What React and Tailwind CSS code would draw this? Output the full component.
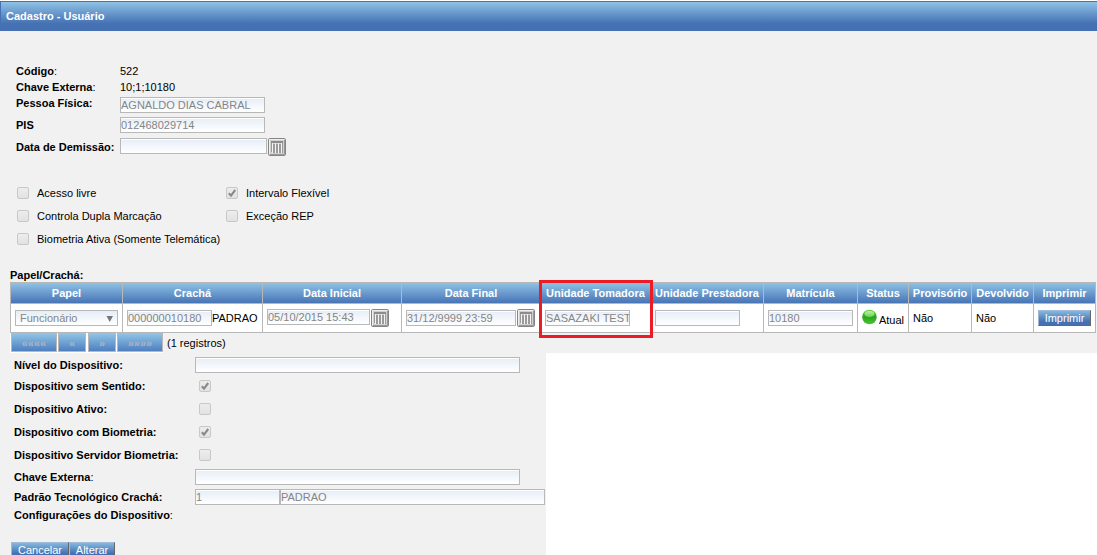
import { clsx } from 'clsx';

/**
 * Text box with the faint blue gradient used all over the form.
 */
function Field({ className = '', ...props }) {
  return (
    <input
      type="text"
      disabled
      className={clsx(
        'h-4 min-w-0 border border-[#b8b8b8] bg-linear-to-b from-[#e6edf7] to-white p-0 text-[#858585] shadow-[inset_0_1px_0_#fff]',
        className
      )}
      {...props}
    />
  );
}

function Check(props) {
  return (
    <span className="grid size-3 shrink-0">
      <input
        type="checkbox"
        disabled
        className="peer col-start-1 row-start-1 size-3 appearance-none rounded-xs border border-[#c8c8c8] bg-linear-to-b from-[#ededed] to-[#e2e2e2]"
        {...props}
      />
      <svg viewBox="0 0 12 12" className="invisible col-start-1 row-start-1 size-3 peer-checked:visible" fill="none" aria-hidden="true">
        <path d="M2.8 6.3 L5 8.6 L9.2 3" stroke="#8a8a8a" strokeWidth="2.1" />
      </svg>
    </span>
  );
}

function CalendarButton({ label }) {
  return (
    <button type="button" aria-label={label} className="size-[18px] shrink-0">
      <svg viewBox="0 0 18 18" className="size-full" aria-hidden="true">
        <rect x="0.5" y="0.5" width="17" height="17" rx="1.2" fill="#d0d0d0" stroke="#858585" />
        <path d="M1.5 16V1.5H16" fill="none" stroke="#f0f0f0" />
        <path d="M16.5 2V16.5H2" fill="none" stroke="#999" />
        <rect x="3" y="3" width="12" height="2" fill="#8c8c8c" />
        <path d="M4.5 5V15M7.5 5V15M10.5 5V15M13.5 5V15" stroke="#f4f4f4" />
        <path d="M3.5 5V14M5.5 6V15M6.5 6V15M8.5 6V15M9.5 6V15M11.5 6V15M12.5 6V15M14.5 5V15" stroke="#8c8c8c" strokeWidth="0.8" />
      </svg>
    </button>
  );
}

function ActionButton({ children, className = '' }) {
  return (
    <button
      type="button"
      className={clsx(
        'h-4 border border-t-[#9fb9d8] border-r-[#666] border-b-[#666] border-l-[#9fb9d8] bg-linear-to-b from-[#84b8df] to-[#4571b3] to-75% leading-[14px] text-white',
        className
      )}
    >
      {children}
    </button>
  );
}

function StatusDot() {
  return (
    <svg viewBox="0 0 16 16" className="size-4" aria-hidden="true">
      <defs>
        <linearGradient id="dot" x1="0" y1="0" x2="0" y2="1">
          <stop offset="0" stopColor="#5fd13c" />
          <stop offset="0.5" stopColor="#28a51c" />
          <stop offset="1" stopColor="#48c832" />
        </linearGradient>
        <linearGradient id="shine" x1="0" y1="0" x2="0" y2="1">
          <stop offset="0" stopColor="#d8f8c8" />
          <stop offset="1" stopColor="#7fdc60" />
        </linearGradient>
      </defs>
      <circle cx="8" cy="8" r="7.8" fill="url(#dot)" />
      <ellipse cx="8" cy="4.6" rx="5.4" ry="3.4" fill="url(#shine)" opacity="0.8" />
    </svg>
  );
}

const options = [
  { id: 'livre', label: 'Acesso livre' },
  { id: 'intervalo', label: 'Intervalo Flexível', checked: true },
  { id: 'dupla', label: 'Controla Dupla Marcação' },
  { id: 'rep', label: 'Exceção REP' },
  { id: 'biometria', label: 'Biometria Ativa (Somente Telemática)' },
];

const deviceFlags = [
  { id: 'sentido', label: 'Dispositivo sem Sentido:', checked: true },
  { id: 'ativo', label: 'Dispositivo Ativo:' },
  { id: 'comBiometria', label: 'Dispositivo com Biometria:', checked: true },
  { id: 'servidor', label: 'Dispositivo Servidor Biometria:' },
];

const columns = [
  { title: 'Papel', width: 'w-[112px]' },
  { title: 'Crachá', width: 'w-[140px]' },
  { title: 'Data Inicial', width: 'w-[139px]' },
  { title: 'Data Final', width: 'w-[139px]' },
  { title: 'Unidade Tomadora', width: 'w-[110px]', marked: true },
  { title: 'Unidade Prestadora', width: 'w-[113px]' },
  { title: 'Matrícula', width: 'w-[94px]' },
  { title: 'Status', width: 'w-[51px]' },
  { title: 'Provisório', width: 'w-[63px]' },
  { title: 'Devolvido', width: 'w-[62px]' },
  { title: 'Imprimir', width: 'w-[62px]' },
];

const pages = [
  { text: '««««', label: 'Primeira página', width: 'w-[46px]' },
  { text: '«', label: 'Página anterior', width: 'w-7' },
  { text: '»', label: 'Próxima página', width: 'ml-px w-7' },
  { text: '»»»»', label: 'Última página', width: 'w-[46px]' },
];

function UserForm() {
  return (
    <div className="grid grid-cols-[104px_1fr] items-center pl-4">
      <div className="h-4 leading-4"><b>Código</b>:</div>
      <div className="h-4 leading-4">522</div>
      <div className="h-4 leading-4"><b>Chave Externa</b>:</div>
      <div className="h-4 leading-4">10;1;10180</div>
      <label htmlFor="pessoa" className="self-start font-bold leading-4">Pessoa Física:</label>
      <div className="flex h-5 items-center"><Field id="pessoa" className="w-[145px]" defaultValue="AGNALDO DIAS CABRAL" /></div>
      <label htmlFor="pis" className="font-bold">PIS</label>
      <div className="flex h-5 items-center"><Field id="pis" className="w-[145px]" defaultValue="012468029714" /></div>
      <label htmlFor="demissao" className="font-bold whitespace-nowrap">Data de Demissão:</label>
      <div className="flex h-6 items-start gap-px pt-[3px]">
        <Field id="demissao" className="w-[147px]" />
        <CalendarButton label="Escolher data de demissão" />
      </div>
    </div>
  );
}

function BadgeTable() {
  return (
    <table className="w-full table-fixed border-collapse bg-white">
      <thead>
        <tr className="h-[21px] bg-linear-to-b from-[#8fc2e5] to-[#4571b3] text-white">
          {columns.map((col) => (
            <th key={col.title} className={clsx('relative border border-[#b8b8b8] p-0 whitespace-nowrap', col.width)}>
              {col.title}
              {col.marked && <span className="pointer-events-none absolute -top-[3px] -left-[2px] h-[58px] w-[114px] border-3 border-[#ed1c24]" />}
            </th>
          ))}
        </tr>
      </thead>
      <tbody>
        <tr className="h-[29px] *:border *:border-[#b8b8b8] *:px-1 *:py-0">
          <td>
            <select disabled aria-label="Papel" className="h-4 w-[103px] appearance-none border border-[#b8b8b8] bg-linear-to-b from-[#e6edf7] to-white pl-1 text-[#858585]">
              <option>Funcionário</option>
            </select>
            <svg viewBox="0 0 8 8" className="pointer-events-none -ml-3 inline size-2" aria-hidden="true"><path d="M0.5 1H7L3.75 7Z" fill="#777" /></svg>
          </td>
          <td>
            <div className="flex items-center">
              <Field aria-label="Crachá" className="w-[85px]" defaultValue="000000010180" />
              <span>PADRAO</span>
            </div>
          </td>
          <td>
            <div className="flex items-start gap-px">
              <Field aria-label="Data Inicial" className="w-[103px]" defaultValue="05/10/2015 15:43" />
              <CalendarButton label="Escolher data inicial" />
            </div>
          </td>
          <td>
            <div className="flex items-center gap-px">
              <Field aria-label="Data Final" className="w-[110px]" defaultValue="31/12/9999 23:59" />
              <CalendarButton label="Escolher data final" />
            </div>
          </td>
          <td><Field aria-label="Unidade Tomadora" className="block w-[85px]" defaultValue="SASAZAKI TEST" /></td>
          <td><Field aria-label="Unidade Prestadora" className="block w-[85px]" /></td>
          <td><Field aria-label="Matrícula" className="block w-[85px]" defaultValue="10180" /></td>
          <td>
            <div className="flex items-start gap-0.5">
              <StatusDot />
              <span className="pt-1">Atual</span>
            </div>
          </td>
          <td>Não</td>
          <td>Não</td>
          <td><ActionButton className="block w-[53px]">Imprimir</ActionButton></td>
        </tr>
      </tbody>
    </table>
  );
}

function Pager() {
  return (
    <div className="flex h-5 items-center gap-1">
      <div className="flex h-full gap-px bg-white pb-px pl-px">
        {pages.map((page) => (
          <button
            key={page.label}
            type="button"
            disabled
            aria-label={page.label}
            className={clsx('border border-[#b8b8b8] bg-linear-to-b from-[#8fc2e5] to-[#4f80bf] font-bold text-[#a9b6c6]', page.width)}
          >
            {page.text}
          </button>
        ))}
      </div>
      <span>(1 registros)</span>
    </div>
  );
}

function DeviceForm() {
  return (
    <div className="grid grid-cols-[181px_1fr] items-center pt-0.5 pr-px pl-3.5">
      <label htmlFor="nivel" className="font-bold">Nível do Dispositivo:</label>
      <div className="flex h-5 items-center"><Field id="nivel" className="w-[325px]" /></div>
      {deviceFlags.map((flag) => (
        <div key={flag.id} className="contents">
          <label htmlFor={flag.id} className="self-start pt-1 font-bold">{flag.label}</label>
          <div className="flex h-[23px] items-start pt-[5px] pl-1"><Check id={flag.id} defaultChecked={flag.checked} /></div>
        </div>
      ))}
      <label htmlFor="chave"><b>Chave Externa</b>:</label>
      <div className="flex h-5 items-center"><Field id="chave" className="w-[325px]" /></div>
      <label htmlFor="padrao" className="font-bold">Padrão Tecnológico Crachá:</label>
      <div className="flex h-5 items-center">
        <Field id="padrao" className="w-[85px]" defaultValue="1" />
        <Field aria-label="Descrição do padrão" className="flex-1" defaultValue="PADRAO" />
      </div>
      <div className="col-span-2 h-4 leading-4"><b>Configurações do Dispositivo</b>:</div>
    </div>
  );
}

export default function App() {
  return (
    <div className="bg-white pt-px font-['Liberation_Sans',Arial,sans-serif] text-[11px] leading-[14px] text-black">
      <header className="flex h-[30px] items-start border-t border-l border-[#4571b3] bg-linear-to-b from-[#8fc2e5] to-[#4571b3] to-75% pt-[7px] pl-[5px]">
        <h1 className="font-bold text-white">Cadastro - Usuário</h1>
      </header>

      <main>
        <div className="bg-[#f1f1f1] pt-8">
          <UserForm />

          <div className="grid w-fit grid-cols-[209px_auto] pt-[22px] pl-[17px]">
            {options.map((opt) => (
              <label key={opt.id} className="flex h-[23px] items-center gap-2 whitespace-nowrap">
                <Check id={opt.id} defaultChecked={opt.checked} />
                {opt.label}
              </label>
            ))}
          </div>

          <section className="pt-[18px] pr-px pl-2.5">
            <h2 className="font-bold">Papel/Crachá:</h2>
            <BadgeTable />
            <Pager />
          </section>
        </div>

        <div className="w-[546px] max-w-full bg-[#f1f1f1]">
          <DeviceForm />
          <div className="flex pt-[19px] pl-[11px]">
            <ActionButton className="w-[58px]">Cancelar</ActionButton>
            <ActionButton className="w-[46px]">Alterar</ActionButton>
          </div>
        </div>
      </main>
    </div>
  );
}
